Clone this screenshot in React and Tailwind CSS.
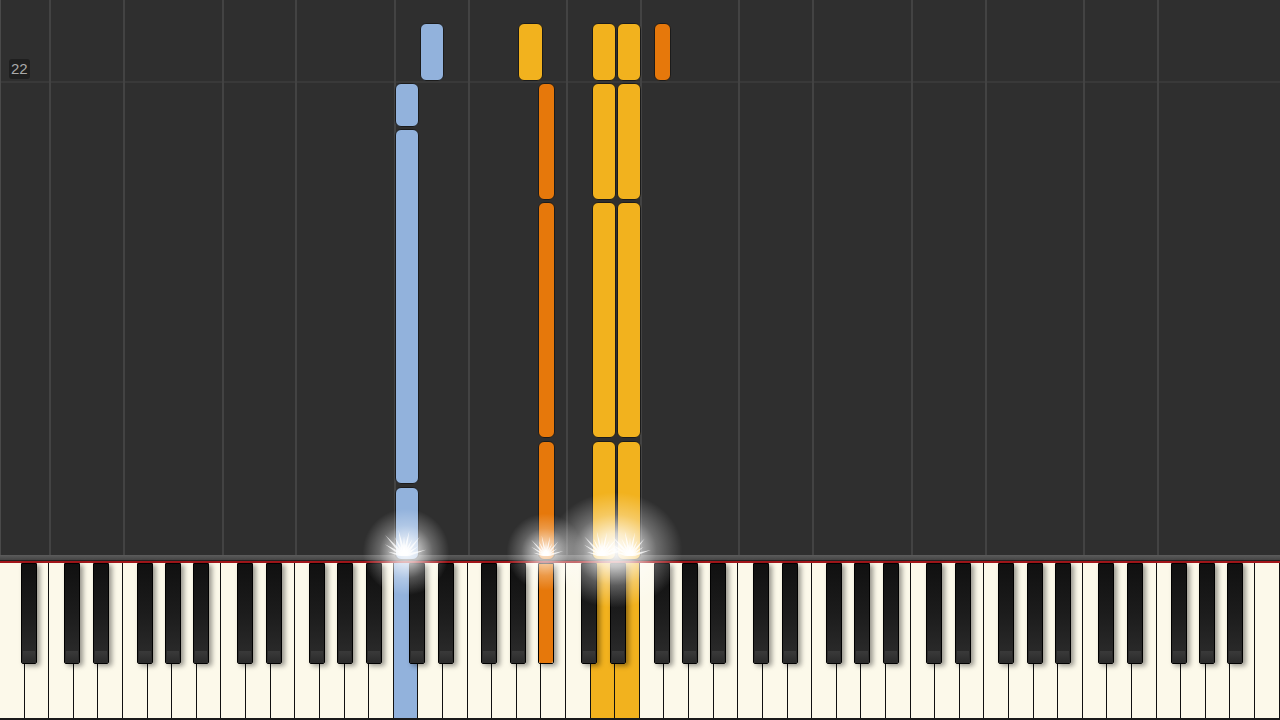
import React from "react";

// Piano roll: 88 keys (A0..C8), 52 white keys across 1280px
const W = 1280 / 52;
const NAMES = ["C", "C#", "D", "D#", "E", "F", "F#", "G", "G#", "A", "A#", "B"];
const BLACK_OFFSET = { "C#": -1.6, "D#": 2.8, "F#": -3, "G#": 0.8, "A#": 4.4 };
const BW = 16;

const keys = [];
let whiteCount = 0;
for (let midi = 21; midi <= 108; midi++) {
  const name = NAMES[midi % 12];
  const id = name + (Math.floor(midi / 12) - 1);
  if (name.includes("#")) {
    keys.push({ id, name, black: true, left: whiteCount * W + BLACK_OFFSET[name] - BW / 2, width: BW });
  } else {
    keys.push({ id, name, black: false, idx: whiteCount, left: whiteCount * W, width: W });
    whiteCount++;
  }
}
const keyById = Object.fromEntries(keys.map((k) => [k.id, k]));
const whiteKeys = keys.filter((k) => !k.black);
const blackKeys = keys.filter((k) => k.black);

const COLORS = {
  blue: "#92b2dc",
  yellow: "#f2b21e",
  orange: "#e6780b",
};

const pressed = { C3: "blue", "A#3": "orange", D4: "yellow", E4: "yellow" };

const notes = [
  { key: "D3", top: 23, bottom: 81, color: "blue" },
  { key: "C3", top: 83, bottom: 127, color: "blue" },
  { key: "C3", top: 129, bottom: 484, color: "blue" },
  { key: "C3", top: 487, bottom: 560, color: "blue" },
  { key: "A3", top: 23, bottom: 81, color: "yellow" },
  { key: "A#3", top: 83, bottom: 200, color: "orange" },
  { key: "A#3", top: 202, bottom: 438, color: "orange" },
  { key: "A#3", top: 441, bottom: 560, color: "orange" },
  { key: "D4", top: 23, bottom: 81, color: "yellow" },
  { key: "D4", top: 83, bottom: 200, color: "yellow" },
  { key: "D4", top: 202, bottom: 438, color: "yellow" },
  { key: "D4", top: 441, bottom: 560, color: "yellow" },
  { key: "E4", top: 23, bottom: 81, color: "yellow" },
  { key: "E4", top: 83, bottom: 200, color: "yellow" },
  { key: "E4", top: 202, bottom: 438, color: "yellow" },
  { key: "E4", top: 441, bottom: 560, color: "yellow" },
  { key: "F#4", top: 23, bottom: 81, color: "orange" },
];

const glows = [
  { x: 406, y: 552, w: 90, h: 90, o: 0.9 },
  { x: 545, y: 552, w: 80, h: 80, o: 0.8 },
  { x: 615, y: 550, w: 140, h: 120, o: 1 },
];

function Spark({ x, size }) {
  // thin white rays fanning up from the hit line
  const rays = [-75, -58, -42, -26, -12, 0, 12, 26, 40, 56, 74];
  return (
    <svg
      className="absolute pointer-events-none"
      style={{ left: x - size / 2, top: 556 - size / 2, width: size, height: size / 2 }}
      viewBox="-50 -50 100 50"
    >
      {rays.map((a, i) => {
        const r = 26 + ((i * 9) % 20);
        const rad = (a * Math.PI) / 180;
        const tx = Math.sin(rad) * r;
        const ty = -Math.cos(rad) * r;
        const px = Math.cos(rad) * 3;
        const py = Math.sin(rad) * 3;
        return (
          <polygon
            key={i}
            points={`${px},${py} ${tx},${ty} ${-px},${-py}`}
            fill="rgba(255,255,255,0.8)"
          />
        );
      })}
    </svg>
  );
}

export default function App() {
  return (
    <div className="relative w-[1280px] h-[720px] overflow-hidden bg-[#2f2f2f] flex flex-col font-['Liberation_Sans',Arial,sans-serif]">
      {/* ── Roll ── */}
      <div className="relative h-[555px] shrink-0 border-l border-[#4a4a4a]">
        {/* measure line */}
        <div className="absolute left-0 right-0 top-[81px] h-[2px] bg-[#393939]" />
        {/* octave / fourth grid */}
        {whiteKeys
          .filter((k) => (k.name === "C" || k.name === "F") && k.idx > 0 && k.idx < 51)
          .map((k) => (
            <div
              key={k.id}
              className="absolute top-0 bottom-0 w-[2px] bg-[#434343]"
              style={{ left: k.left - 1 }}
            />
          ))}

        {/* measure number */}
        <div className="absolute left-[8px] top-[59px] px-[2px] h-[20px] rounded-[3px] bg-[#1f1f1f] text-[#a9a9a9] text-[15px] leading-[20px]">
          22
        </div>

        {/* notes */}
        {notes.map((n, i) => {
          const k = keyById[n.key];
          return (
            <div
              key={i}
              className="absolute rounded-[6px] border border-[#1b1b1b]"
              style={{
                left: k.black ? k.left - 0.5 : k.left + 0.5,
                width: k.black ? k.width + 1 : k.width - 0.5,
                top: n.top,
                height: n.bottom - n.top,
                backgroundColor: COLORS[n.color],
              }}
            />
          );
        })}
      </div>

      {/* ── Separator ── */}
      <div className="h-[5px] shrink-0 bg-gradient-to-b from-[#5c5c5c] to-[#444444]" />
      <div className="h-px shrink-0 bg-[#222222]" />
      <div className="h-[2px] shrink-0 bg-[#a3161a]" />

      {/* ── Keyboard ── */}
      <div className="relative h-[157px] shrink-0 flex bg-black">
        {whiteKeys.map((k) => {
          const c = pressed[k.id];
          return (
            <div
              key={k.id}
              className={
                c
                  ? "flex-1 border-r-[1.5px] border-[#111111] rounded-b-[2px]"
                  : "flex-1 border-r-[1.5px] border-[#111111] bg-[#fcf9ea] rounded-b-[2px]"
              }
              style={c ? { backgroundColor: COLORS[c] } : undefined}
            />
          );
        })}
        <div className="absolute left-0 right-0 bottom-0 h-[2px] bg-[#1a1a1a]" />

        {blackKeys.map((k) => {
          const c = pressed[k.id];
          return (
            <div
              key={k.id}
              className="absolute top-0 h-[101px] rounded-b-[2px] border border-black shadow-[3px_2px_5px_rgba(0,0,0,0.4)] flex flex-col justify-end"
              style={{ left: k.left, width: k.width }}
            >
              {c ? (
                <div className="absolute inset-0 rounded-b-[2px]" style={{ backgroundColor: COLORS[c] }} />
              ) : (
                <>
                  <div className="absolute inset-0 bg-gradient-to-b from-[#101010] via-[#1c1c1c] to-[#2d2d2d]" />
                  <div className="relative h-[11px] mx-[1px] mb-[1px] rounded-b-[2px] bg-gradient-to-b from-[#3a3a3a] to-[#2b2b2b]" />
                </>
              )}
            </div>
          );
        })}
      </div>

      {/* ── Hit glows (overlay) ── */}
      {glows.map((g, i) => (
        <div
          key={i}
          className="absolute pointer-events-none rounded-full bg-[radial-gradient(ellipse_at_center,rgba(255,255,255,1)_0%,rgba(255,255,255,0.75)_20%,rgba(255,255,255,0.3)_42%,rgba(255,255,255,0)_68%)]"
          style={{ left: g.x - g.w / 2, top: g.y - g.h / 2, width: g.w, height: g.h, opacity: g.o }}
        />
      ))}
      <Spark x={404} size={64} />
      <Spark x={546} size={50} />
      <Spark x={602} size={60} />
      <Spark x={630} size={60} />
    </div>
  );
}
